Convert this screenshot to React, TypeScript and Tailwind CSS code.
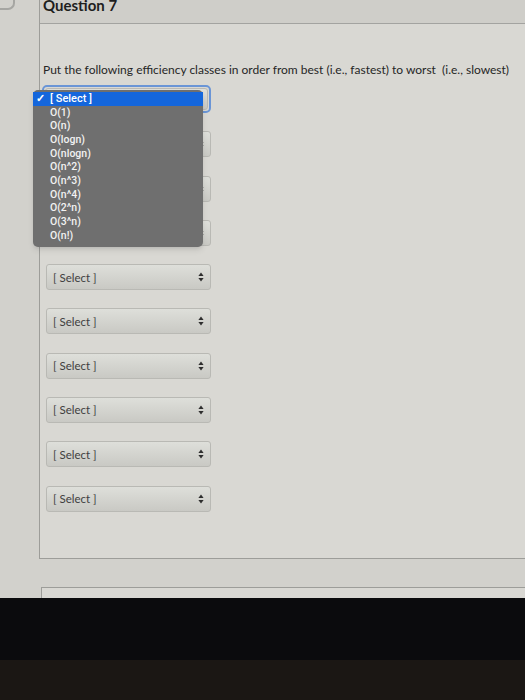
import React from "react";

const OPTIONS = [
  "O(1)",
  "O(n)",
  "O(logn)",
  "O(nlogn)",
  "O(n^2)",
  "O(n^3)",
  "O(n^4)",
  "O(2^n)",
  "O(3^n)",
  "O(n!)",
];

const lato = { fontFamily: "Lato, 'Open Sans', sans-serif" };
const menuFont = { fontFamily: "Roboto, 'Liberation Sans', sans-serif" };

function Arrows() {
  return (
    <svg width="6" height="10" viewBox="0 0 6 10" className="shrink-0">
      <path d="M3 0.5 L5.6 4 H0.4 Z" fill="#2e2e2e" />
      <path d="M3 9.5 L5.6 6 H0.4 Z" fill="#2e2e2e" />
    </svg>
  );
}

function FakeSelect({ focused = false }: { focused?: boolean }) {
  return (
    <div
      className={
        focused
          ? "w-[169px] h-[28px] -ml-[4px] rounded-[5px] border-2 border-[#6a95d6] p-[1px]"
          : "w-[165px] h-[26px]"
      }
    >
      <div className="h-full w-full flex items-center justify-between pl-[6px] pr-[6px] rounded-[3px] border border-[#b9b9b4] bg-gradient-to-b from-[#dedfda] to-[#c9c9c4]">
        <span className="text-[11.5px] text-[#3f3f3f]" style={lato}>
          [ Select ]
        </span>
        <Arrows />
      </div>
    </div>
  );
}

export default function App() {
  return (
    <div className="relative w-[525px] h-[700px] overflow-hidden bg-[#d2d1cc]" style={lato}>
      {/* screen content */}
      <div className="h-[598px] flex flex-col">
        {/* top-left bookmark shape */}
        <div className="absolute left-0 top-0 w-[15px] h-[10px] border-r-2 border-b-2 border-[#a6a6a2] rounded-br-[7px]" />

        <div className="ml-[39px] h-[559px] flex flex-col border-l border-b border-[#9d9d99] bg-[#d9d8d3]">
          <div className="h-[27px] shrink-0 bg-[#cfcec9] border-b border-[#a3a3a0] pl-[3px] -mt-[3px]">
            <span className="block text-[15px] font-bold text-[#1e1e1e] leading-[16px]">Question 7</span>
          </div>

          <div className="pt-[39px] pl-[3px] flex flex-col">
            <p className="text-[12px] text-[#262626] leading-[14px] whitespace-pre">
              {"Put the following efficiency classes in order from best (i.e., fastest) to worst  (i.e., slowest)"}
            </p>

            <div className="mt-[8px] ml-[3px] flex flex-col gap-[18.3px]">
              <FakeSelect focused />
              {Array.from({ length: 9 }).map((_, i) => (
                <FakeSelect key={i} />
              ))}
            </div>
          </div>
        </div>

        <div className="mt-[28px] ml-[41px] flex-1 border-l border-t border-[#9d9d99] bg-[#d9d8d3]" />
      </div>

      {/* monitor bezel */}
      <div className="h-[62px] bg-[#0b0b0d]" />
      <div className="h-[40px] bg-[#1b1714]" />

      {/* open dropdown menu */}
      <div
        className="absolute left-[33px] top-[90px] w-[170px] h-[157px] rounded-[5px] bg-[#6f6f6f] pt-[2px] shadow-md"
        style={menuFont}
      >
        <div className="h-[13.7px] flex items-center bg-[#1466dc] text-white text-[11px] font-medium leading-[12px]">
          <span className="w-[17px] pl-[3px] text-[11px] font-bold">✓</span>
          <span>[ Select ]</span>
        </div>
        {OPTIONS.map((o) => (
          <div
            key={o}
            className="h-[13.7px] flex items-center pl-[17px] text-[10.5px] leading-[12px] font-medium text-[#f2f2f2]"
          >
            {o}
          </div>
        ))}
      </div>
    </div>
  );
}
